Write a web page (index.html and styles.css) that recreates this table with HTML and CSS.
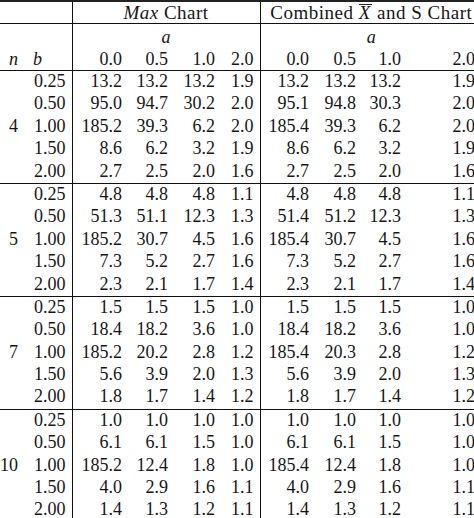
FILE: index.html
```html
<!DOCTYPE html>
<html lang="en">
<head>
  <meta charset="UTF-8">
  <title>Max Chart vs Combined Chart</title>
  <link rel="stylesheet" href="styles.css">
</head>
<body>
  <table class="results">
    <colgroup>
      <col class="cN">
      <col class="cB">
      <col class="c1"><col class="c2"><col class="c3"><col class="c4">
      <col class="c5"><col class="c6"><col class="c7"><col class="c8">
    </colgroup>
    <thead>
      <tr class="headTitle">
        <th colspan="2"></th>
        <th colspan="4" class="split"><i>Max</i> Chart</th>
        <th colspan="4" class="split">Combined <i class="xbar">X</i> and S Chart</th>
      </tr>
      <tr class="headA">
        <th colspan="2"></th>
        <th colspan="4" class="split"><i>a</i></th>
        <th colspan="4" class="split"><i>a</i></th>
      </tr>
      <tr class="headCols">
        <th class="nCell"><i>n</i></th>
        <th class="bHead"><i>b</i></th>
        <th class="split">0.0</th><th>0.5</th><th>1.0</th><th>2.0</th>
        <th class="split">0.0</th><th>0.5</th><th>1.0</th><th class="last">2.0</th>
      </tr>
    </thead>
    <tbody>
      <!-- n = 4 -->
      <tr><td></td><td>0.25</td><td class="split">13.2</td><td>13.2</td><td>13.2</td><td>1.9</td><td class="split">13.2</td><td>13.2</td><td>13.2</td><td class="last">1.9</td></tr>
      <tr><td></td><td>0.50</td><td class="split">95.0</td><td>94.7</td><td>30.2</td><td>2.0</td><td class="split">95.1</td><td>94.8</td><td>30.3</td><td class="last">2.0</td></tr>
      <tr><td class="nCell">4</td><td>1.00</td><td class="split">185.2</td><td>39.3</td><td>6.2</td><td>2.0</td><td class="split">185.4</td><td>39.3</td><td>6.2</td><td class="last">2.0</td></tr>
      <tr><td></td><td>1.50</td><td class="split">8.6</td><td>6.2</td><td>3.2</td><td>1.9</td><td class="split">8.6</td><td>6.2</td><td>3.2</td><td class="last">1.9</td></tr>
      <tr class="groupEnd"><td></td><td>2.00</td><td class="split">2.7</td><td>2.5</td><td>2.0</td><td>1.6</td><td class="split">2.7</td><td>2.5</td><td>2.0</td><td class="last">1.6</td></tr>
      <!-- n = 5 -->
      <tr><td></td><td>0.25</td><td class="split">4.8</td><td>4.8</td><td>4.8</td><td>1.1</td><td class="split">4.8</td><td>4.8</td><td>4.8</td><td class="last">1.1</td></tr>
      <tr><td></td><td>0.50</td><td class="split">51.3</td><td>51.1</td><td>12.3</td><td>1.3</td><td class="split">51.4</td><td>51.2</td><td>12.3</td><td class="last">1.3</td></tr>
      <tr><td class="nCell">5</td><td>1.00</td><td class="split">185.2</td><td>30.7</td><td>4.5</td><td>1.6</td><td class="split">185.4</td><td>30.7</td><td>4.5</td><td class="last">1.6</td></tr>
      <tr><td></td><td>1.50</td><td class="split">7.3</td><td>5.2</td><td>2.7</td><td>1.6</td><td class="split">7.3</td><td>5.2</td><td>2.7</td><td class="last">1.6</td></tr>
      <tr class="groupEnd"><td></td><td>2.00</td><td class="split">2.3</td><td>2.1</td><td>1.7</td><td>1.4</td><td class="split">2.3</td><td>2.1</td><td>1.7</td><td class="last">1.4</td></tr>
      <!-- n = 7 -->
      <tr><td></td><td>0.25</td><td class="split">1.5</td><td>1.5</td><td>1.5</td><td>1.0</td><td class="split">1.5</td><td>1.5</td><td>1.5</td><td class="last">1.0</td></tr>
      <tr><td></td><td>0.50</td><td class="split">18.4</td><td>18.2</td><td>3.6</td><td>1.0</td><td class="split">18.4</td><td>18.2</td><td>3.6</td><td class="last">1.0</td></tr>
      <tr><td class="nCell">7</td><td>1.00</td><td class="split">185.2</td><td>20.2</td><td>2.8</td><td>1.2</td><td class="split">185.4</td><td>20.3</td><td>2.8</td><td class="last">1.2</td></tr>
      <tr><td></td><td>1.50</td><td class="split">5.6</td><td>3.9</td><td>2.0</td><td>1.3</td><td class="split">5.6</td><td>3.9</td><td>2.0</td><td class="last">1.3</td></tr>
      <tr class="groupEnd"><td></td><td>2.00</td><td class="split">1.8</td><td>1.7</td><td>1.4</td><td>1.2</td><td class="split">1.8</td><td>1.7</td><td>1.4</td><td class="last">1.2</td></tr>
      <!-- n = 10 -->
      <tr><td></td><td>0.25</td><td class="split">1.0</td><td>1.0</td><td>1.0</td><td>1.0</td><td class="split">1.0</td><td>1.0</td><td>1.0</td><td class="last">1.0</td></tr>
      <tr><td></td><td>0.50</td><td class="split">6.1</td><td>6.1</td><td>1.5</td><td>1.0</td><td class="split">6.1</td><td>6.1</td><td>1.5</td><td class="last">1.0</td></tr>
      <tr><td class="nCell">10</td><td>1.00</td><td class="split">185.2</td><td>12.4</td><td>1.8</td><td>1.0</td><td class="split">185.4</td><td>12.4</td><td>1.8</td><td class="last">1.0</td></tr>
      <tr><td></td><td>1.50</td><td class="split">4.0</td><td>2.9</td><td>1.6</td><td>1.1</td><td class="split">4.0</td><td>2.9</td><td>1.6</td><td class="last">1.1</td></tr>
      <tr class="groupEnd"><td></td><td>2.00</td><td class="split">1.4</td><td>1.3</td><td>1.2</td><td>1.1</td><td class="split">1.4</td><td>1.3</td><td>1.2</td><td class="last">1.1</td></tr>
    </tbody>
  </table>
</body>
</html>
```

FILE: styles.css
```css
html, body {
  margin: 0;
  padding: 0;
  background: #fff;
  overflow: hidden;
}

body {
  font-family: "Liberation Serif", "DejaVu Serif", serif;
  font-size: 18px;
  color: #161616;
}

.results {
  border-collapse: collapse;
  table-layout: fixed;
  width: 482px;
  border-top: 2px solid #222;
}

/* column widths */
.cN { width: 24px; }
.cB { width: 48px; }
.c1 { width: 56px; }
.c2 { width: 46px; }
.c3 { width: 47px; }
.c4 { width: 39px; }
.c5 { width: 55px; }
.c6 { width: 47px; }
.c7 { width: 45px; }
.c8 { width: 75px; }

.results th,
.results td {
  padding: 0 6px 0 0;
  text-align: right;
  font-weight: normal;
  white-space: nowrap;
  line-height: 20px;
}

.results td {
  height: 22.4px;
  vertical-align: top;
  padding-top: 0;
}

.split {
  border-left: 1px solid #111;
}

.results td.last,
.results th.last {
  padding-right: 7px;
}

/* header rows */
.headTitle th {
  height: 21px;
  text-align: center;
  padding: 0;
  font-size: 19px;
  letter-spacing: 0.5px;
  border-bottom: 1px solid #111;
}

.headA th {
  height: 22px;
  text-align: center;
  padding: 2px 0 0 0;
}

.headCols th {
  height: 22px;
  border-bottom: 1px solid #111;
}

.results .bHead {
  text-align: left;
  padding-left: 9px;
}

.nCell {
  padding-right: 6px;
}

/* X with a bar over it */
.xbar {
  display: inline-block;
  line-height: 15px;
  padding-right: 1px;
  border-top: 1px solid #222;
}

/* group separators */
.groupEnd td {
  border-bottom: 1px solid #111;
}
```
